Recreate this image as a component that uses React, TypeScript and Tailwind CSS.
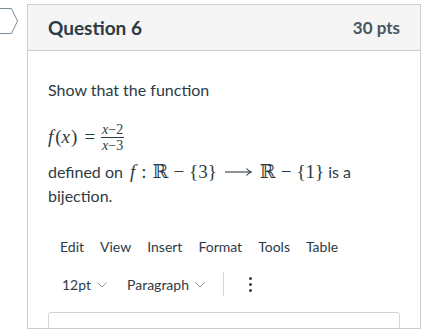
import React from "react";

const menuItems = ["Edit", "View", "Insert", "Format", "Tools", "Table"];

function Chevron() {
  return (
    <svg width="10" height="6" viewBox="0 0 10 6" className="ml-[6px] mt-[2px]">
      <path d="M0.5 0.5 L5 5 L9.5 0.5" fill="none" stroke="#8b969e" strokeWidth="1" />
    </svg>
  );
}

function LongArrow() {
  return (
    <svg width="27" height="10" viewBox="0 0 27 10" className="mx-[8px] inline-block align-[1px]">
      <path d="M0 5 H26" stroke="#2d3b45" strokeWidth="1.1" />
      <path d="M21.5 1.5 Q23.5 4 26.3 5 Q23.5 6 21.5 8.5" fill="none" stroke="#2d3b45" strokeWidth="1.1" />
    </svg>
  );
}

const serif = "font-['Liberation_Serif','DejaVu_Serif',serif]";

export default function App() {
  return (
    <div className="flex h-[329px] w-[432px] overflow-hidden bg-white font-['Lato','Noto_Sans',sans-serif] text-[#2d3b45]">
      <svg width="27" height="40" viewBox="0 0 27 40" className="mt-[8px] shrink-0">
        <path d="M-4 0.5 H11.5 L17.5 13 L11.5 25.5 H-4" fill="none" stroke="#7d8c99" strokeWidth="1" />
      </svg>
      <div className="mt-[4px] w-[394px] shrink-0 border border-[#c7cdd1]">
        <div className="flex h-[46px] items-center justify-between border-b border-[#c7cdd1] bg-[#f5f5f5] pl-[20px] pr-[20px]">
          <h2 className="text-[19px] font-bold leading-none">Question 6</h2>
          <span className="text-[17px] font-bold leading-none text-[#4a5560]">30 pts</span>
        </div>
        <div className="px-[20px] pt-[27px]">
          <p className="text-[16px] leading-[24px]">Show that the function</p>
          <div className={`mt-[19px] flex h-[32px] items-center ${serif} text-[19px]`}>
            <span className="pr-[1px]">
              <i className="pr-[2px]">f</i>(<i className="pr-[1px]">x</i>)
            </span>
            <span className="mx-[6px]">=</span>
            <span className="inline-flex flex-col items-center text-[14px] leading-[13px]">
              <span className="px-[1px] pb-[1px]">
                <i>x</i>−2
              </span>
              <span className="h-px w-full bg-[#2d3b45]" />
              <span className="px-[1px] pt-[1px]">
                <i>x</i>−3
              </span>
            </span>
          </div>
          <p className="mt-[7px] w-[340px] text-[16px] leading-[24px]">
            defined on{" "}
            <span className={`${serif} ml-[3px] text-[19px]`}>
              <i>f</i>
              <span className="mx-[6px]">:</span>
              <span>ℝ</span>
              <span className="mx-[5px]">−</span>
              <span>{"{"}3{"}"}</span>
              <LongArrow />
              <span>ℝ</span>
              <span className="mx-[5px]">−</span>
              <span>{"{"}1{"}"}</span>
            </span>{" "}
            is a bijection.
          </p>
          <div className="mt-[29px] flex gap-[16px] pl-[12px] text-[14px] leading-[20px]">
            {menuItems.map((m) => (
              <span key={m}>{m}</span>
            ))}
          </div>
          <div className="mt-[15px] flex h-[24px] items-center pl-[14px] text-[14px]">
            <span>12pt</span>
            <Chevron />
            <span className="ml-[20px]">Paragraph</span>
            <Chevron />
            <span className="ml-[18px] h-[24px] w-px bg-[#cfd4d8]" />
            <span className="ml-[25px] flex flex-col gap-[3px]">
              <span className="h-[3px] w-[3px] rounded-full bg-[#2d3b45]" />
              <span className="h-[3px] w-[3px] rounded-full bg-[#2d3b45]" />
              <span className="h-[3px] w-[3px] rounded-full bg-[#2d3b45]" />
            </span>
          </div>
          <div className="mt-[16px] h-[40px] rounded-t-[3px] border border-[#cfd4d8]" />
        </div>
      </div>
    </div>
  );
}
